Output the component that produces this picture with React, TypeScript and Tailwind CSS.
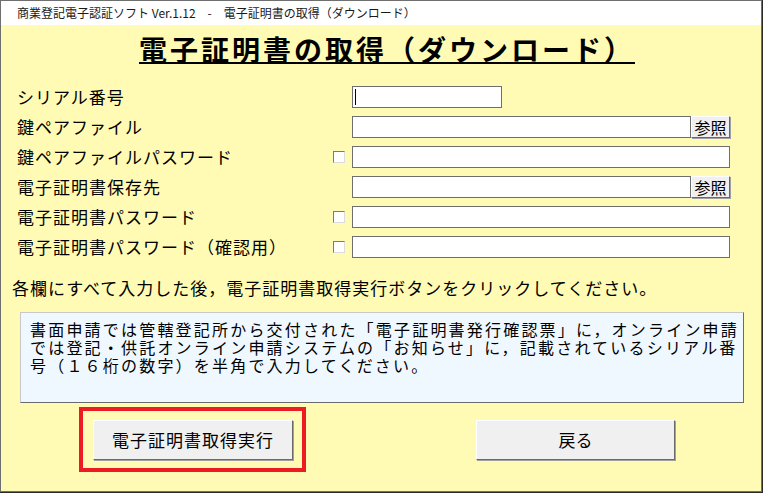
const JP = { fontFamily: '"Noto Sans CJK JP", "Noto Sans", sans-serif' };

type Row = { label: string; check?: boolean; browse?: boolean; short?: boolean; cursor?: boolean };

const ROWS: Row[] = [
  { label: "シリアル番号", short: true, cursor: true },
  { label: "鍵ペアファイル", browse: true },
  { label: "鍵ペアファイルパスワード", check: true },
  { label: "電子証明書保存先", browse: true },
  { label: "電子証明書パスワード", check: true },
  { label: "電子証明書パスワード（確認用）", check: true },
];

function Checkbox() {
  return (
    <div className="w-[12px] h-[12px] bg-white border border-t-[#7a7a7a] border-l-[#7a7a7a] border-r-[#dcdcdc] border-b-[#dcdcdc]" />
  );
}

function TextBox({ width, cursor }: { width?: string; cursor?: boolean }) {
  return (
    <div className={`relative h-[22px] bg-white border border-[#6e6e6e] ${width ?? "flex-1"}`}>
      {cursor && <div className="absolute left-[2px] top-[2px] w-px h-[16px] bg-black" />}
    </div>
  );
}

function WinButton({ children, className }: { children: React.ReactNode; className: string }) {
  return (
    <button
      className={`flex items-center justify-center bg-[#f0f0f0] border border-t-white border-l-white border-r-[#6a6a6a] border-b-[#6a6a6a] shadow-[1px_1px_0_#a0a0a0] text-black ${className}`}
    >
      {children}
    </button>
  );
}

export default function App() {
  return (
    <div className="w-[763px] h-[493px] bg-[#2a2a2a] overflow-hidden" style={JP}>
      <div className="w-[762px] h-[492px] flex flex-col border border-[#6f6f6f] bg-white">
        {/* title bar */}
        <div className="h-[24px] flex items-center pl-[16px] text-[12px] text-[#1a1a1a] bg-white">
          商業登記電子認証ソフト Ver.1.12　-　電子証明書の取得（ダウンロード）
        </div>

        <div className="flex-1 bg-[#fffbb4] flex flex-col">
          {/* heading */}
          <div className="h-[61px] flex justify-center pt-[9px] pl-[12px]">
            <span className="h-[30px] text-[28px] leading-[30px] font-bold tracking-[3px] text-black border-b-2 border-black">
              電子証明書の取得（ダウンロード）
            </span>
          </div>

          {/* form rows */}
          <div className="flex flex-col gap-[8px]">
            {ROWS.map((r) => (
              <div key={r.label} className="flex items-center h-[22px]">
                <div className="w-[332px] pl-[16px] text-[17px] tracking-[1px] leading-[22px] text-black whitespace-nowrap">
                  {r.label}
                </div>
                <div className="w-[19px] flex items-center">{r.check && <Checkbox />}</div>
                {r.short ? (
                  <TextBox width="w-[150px]" cursor={r.cursor} />
                ) : (
                  <div className="flex w-[378px]">
                    <TextBox />
                    {r.browse && (
                      <WinButton className="w-[39px] h-[22px] text-[16px] leading-none">参照</WinButton>
                    )}
                  </div>
                )}
              </div>
            ))}
          </div>

          {/* instruction */}
          <div className="mt-[19px] pl-[11px] text-[17px] tracking-[1px] leading-[22px] text-black whitespace-nowrap">
            各欄にすべて入力した後，電子証明書取得実行ボタンをクリックしてください。
          </div>

          {/* note box */}
          <div className="mt-[13px] ml-[19px] w-[724px] h-[91px] bg-[#f0f8ff] border border-t-[#c8c8c8] border-l-[#c8c8c8] border-r-[#6a6a6a] border-b-[#6a6a6a] pl-[9px] pt-[7px] text-[16px] tracking-[2.2px] leading-[18px] text-black whitespace-nowrap">
            <div>書面申請では管轄登記所から交付された「電子証明書発行確認票」に，オンライン申請</div>
            <div>では登記・供託オンライン申請システムの「お知らせ」に，記載されているシリアル番</div>
            <div>号（１６桁の数字）を半角で入力してください。</div>
          </div>

          {/* buttons */}
          <div className="mt-[4px] flex items-start">
            <div className="ml-[78px] w-[227px] h-[65px] border-4 border-[#ed1c24] pl-[10px] pt-[9px]">
              <WinButton className="w-[200px] h-[40px] text-[17px] tracking-[1px]">電子証明書取得実行</WinButton>
            </div>
            <WinButton className="ml-[170px] mt-[13px] w-[199px] h-[40px] text-[17px]">戻る</WinButton>
          </div>
        </div>
      </div>
    </div>
  );
}
